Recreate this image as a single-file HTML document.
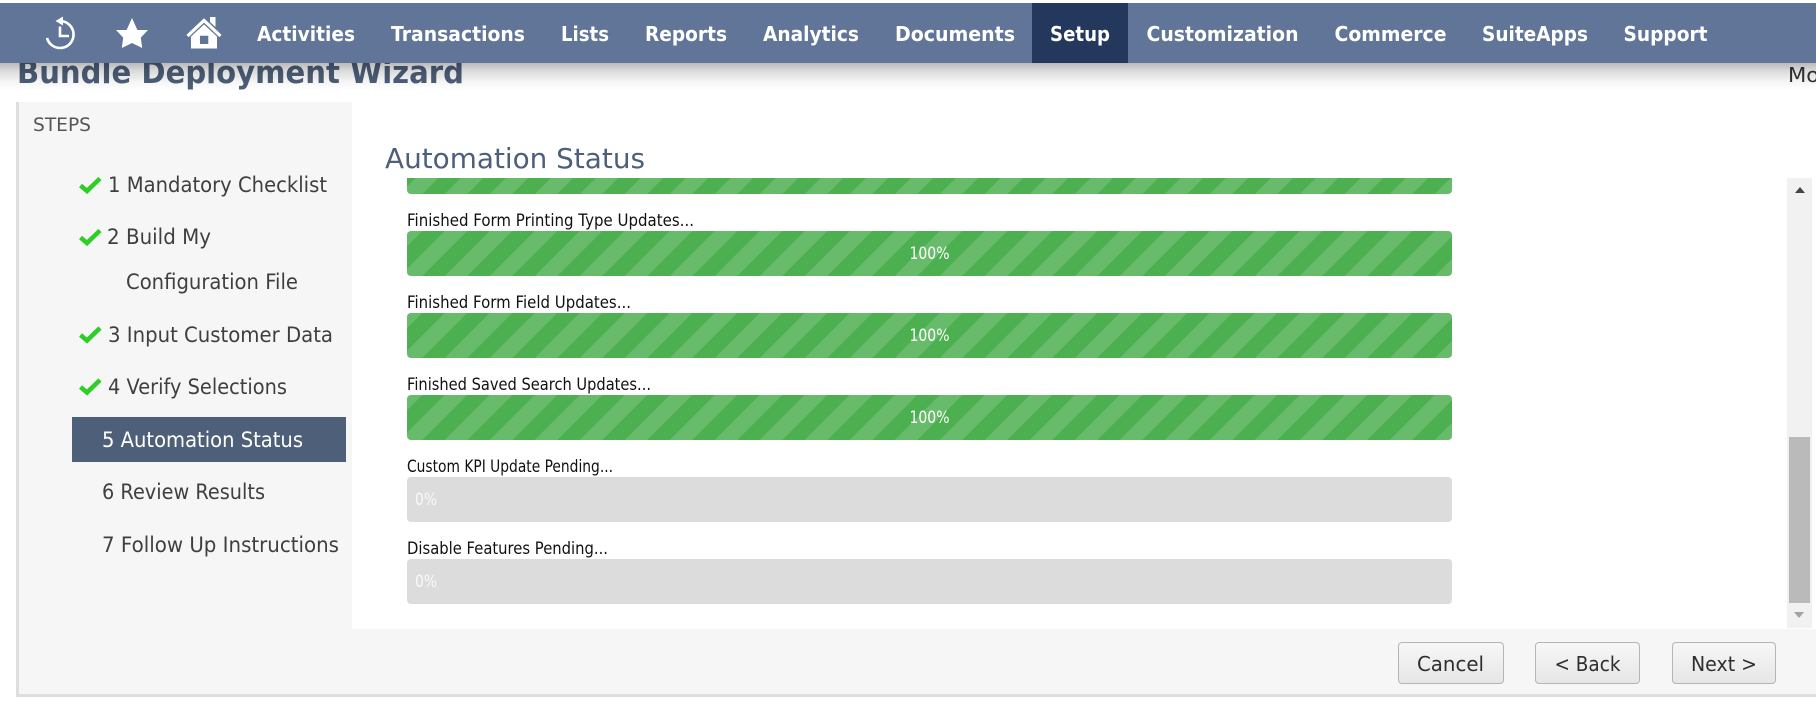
<!DOCTYPE html>
<html lang="en">
<head>
<meta charset="utf-8">
<title>Bundle Deployment Wizard</title>
<style>
html,body{margin:0;padding:0;background:#fff;}
body{width:1816px;height:706px;overflow:hidden;position:relative;font-family:"DejaVu Sans","Liberation Sans",sans-serif;}
.a{position:absolute;}
.bar{position:absolute;left:407px;width:1045px;height:45px;border-radius:4px;}
.g{background-color:#4caf50;background-image:linear-gradient(135deg,rgba(255,255,255,.15) 25%,transparent 25%,transparent 50%,rgba(255,255,255,.15) 50%,rgba(255,255,255,.15) 75%,transparent 75%,transparent);background-size:45px 45px;background-position:-7px 0;}
.z{background:#dcdcdc;}
.btn{position:absolute;top:642px;height:40px;border:1px solid #b5b5b5;border-radius:4px;background:linear-gradient(#f7f7f7,#e6e6e6);}
svg{position:absolute;left:0;top:0;}
text{font-family:"DejaVu Sans","Liberation Sans",sans-serif;}
</style>
</head>
<body>
<!-- panel frame -->
<div class="a" style="left:16px;top:102px;width:1800px;height:595px;background:#dedede;"></div>
<div class="a" style="left:19px;top:102px;width:1797px;height:592px;background:#f6f6f6;"></div>
<div class="a" style="left:352px;top:102px;width:1464px;height:527px;background:#fff;"></div>

<!-- active step -->
<div class="a" style="left:72px;top:417px;width:274px;height:45px;background:#4d5f79;"></div>

<!-- progress bars -->
<div class="bar g" style="top:178px;height:16px;border-radius:0 0 4px 4px;background-position:-7px -29px;"></div>
<div class="bar g" style="top:231px;"></div>
<div class="bar g" style="top:313px;"></div>
<div class="bar g" style="top:395px;"></div>
<div class="bar z" style="top:477px;"></div>
<div class="bar z" style="top:559px;"></div>

<!-- scrollbar -->
<div class="a" style="left:1787px;top:178px;width:25px;height:450px;background:#f1f1f1;"></div>
<div class="a" style="left:1789px;top:437px;width:21px;height:166px;background:#bababa;"></div>
<div class="a" style="left:1795px;top:187px;width:0;height:0;border-left:5px solid transparent;border-right:5px solid transparent;border-bottom:6px solid #444;"></div>
<div class="a" style="left:1794px;top:612px;width:0;height:0;border-left:5.5px solid transparent;border-right:5.5px solid transparent;border-top:6px solid #a3a3a3;"></div>

<!-- buttons -->
<div class="btn" style="left:1398px;width:104px;"></div>
<div class="btn" style="left:1535px;width:103px;"></div>
<div class="btn" style="left:1672px;width:102px;"></div>

<!-- text under the nav shadow -->
<svg width="1816" height="706" viewBox="0 0 1816 706" xmlns="http://www.w3.org/2000/svg">
  <text x="17" y="83" font-size="31" font-weight="700" fill="#4d5f79" textLength="447" lengthAdjust="spacingAndGlyphs">Bundle Deployment Wizard</text>
  <text x="1788" y="82" font-size="20" fill="#333" textLength="40" lengthAdjust="spacingAndGlyphs">Mor</text>

  <text x="33" y="131" font-size="19" fill="#555" textLength="58" lengthAdjust="spacingAndGlyphs">STEPS</text>

  <g font-size="21" fill="#3f3f3f">
    <text x="108" y="192" textLength="219" lengthAdjust="spacingAndGlyphs">1 Mandatory Checklist</text>
    <text x="107" y="244" textLength="104" lengthAdjust="spacingAndGlyphs">2 Build My</text>
    <text x="126" y="289" textLength="172" lengthAdjust="spacingAndGlyphs">Configuration File</text>
    <text x="108" y="342" textLength="225" lengthAdjust="spacingAndGlyphs">3 Input Customer Data</text>
    <text x="108" y="394" textLength="179" lengthAdjust="spacingAndGlyphs">4 Verify Selections</text>
    <text x="102" y="447" fill="#fff" textLength="201" lengthAdjust="spacingAndGlyphs">5 Automation Status</text>
    <text x="102" y="499" textLength="163" lengthAdjust="spacingAndGlyphs">6 Review Results</text>
    <text x="102" y="552" textLength="237" lengthAdjust="spacingAndGlyphs">7 Follow Up Instructions</text>
  </g>

  <g fill="none" stroke="#2fce27" stroke-width="4.6" stroke-linejoin="miter">
    <path d="M80.5 185.5 L87 191 L100 178.5"/>
    <path d="M80.5 237.5 L87 243 L100 230.5"/>
    <path d="M80.5 335 L87 340.5 L100 328"/>
    <path d="M80.5 387 L87 392.5 L100 380"/>
  </g>

  <text x="385" y="168" font-size="28" fill="#4d5f79" textLength="260" lengthAdjust="spacingAndGlyphs">Automation Status</text>

  <g font-size="16.5" fill="#111">
    <text x="407" y="226" textLength="287" lengthAdjust="spacingAndGlyphs">Finished Form Printing Type Updates...</text>
    <text x="407" y="308" textLength="224" lengthAdjust="spacingAndGlyphs">Finished Form Field Updates...</text>
    <text x="407" y="390" textLength="244" lengthAdjust="spacingAndGlyphs">Finished Saved Search Updates...</text>
    <text x="407" y="472" textLength="206" lengthAdjust="spacingAndGlyphs">Custom KPI Update Pending...</text>
    <text x="407" y="554" textLength="201" lengthAdjust="spacingAndGlyphs">Disable Features Pending...</text>
  </g>

  <g font-size="17" fill="#fff">
    <text x="909.5" y="259" textLength="40" lengthAdjust="spacingAndGlyphs">100%</text>
    <text x="909.5" y="341" textLength="40" lengthAdjust="spacingAndGlyphs">100%</text>
    <text x="909.5" y="423" textLength="40" lengthAdjust="spacingAndGlyphs">100%</text>
    <text x="415" y="505" fill="#f8f8f8" textLength="22" lengthAdjust="spacingAndGlyphs">0%</text>
    <text x="415" y="587" fill="#f8f8f8" textLength="22" lengthAdjust="spacingAndGlyphs">0%</text>
  </g>

  <g font-size="20.5" fill="#2e2e2e">
    <text x="1417" y="671" textLength="67" lengthAdjust="spacingAndGlyphs">Cancel</text>
    <text x="1554.5" y="671" textLength="66" lengthAdjust="spacingAndGlyphs">&lt; Back</text>
    <text x="1691" y="671" textLength="66" lengthAdjust="spacingAndGlyphs">Next &gt;</text>
  </g>
</svg>

<!-- nav shadow -->
<div class="a" style="left:0;top:63px;width:1816px;height:27px;background:linear-gradient(rgba(0,0,0,.27),rgba(0,0,0,.14) 30%,rgba(0,0,0,.04) 70%,rgba(0,0,0,0));"></div>

<!-- nav -->
<div class="a" style="left:0;top:3px;width:1816px;height:60px;background:#607598;"></div>
<div class="a" style="left:1032px;top:3px;width:96px;height:60px;background:#24375c;"></div>

<svg width="1816" height="70" viewBox="0 0 1816 70" xmlns="http://www.w3.org/2000/svg">
  <!-- recent records -->
  <path d="M60.5 21 A13.5 13.5 0 1 1 47 38" fill="none" stroke="#fff" stroke-width="2.6"/>
  <path d="M55.5 21 L63 16.5 L63 25.5 Z" fill="#fff"/>
  <path d="M60 26.5 L60 36 L69 36" fill="none" stroke="#fff" stroke-width="2.6"/>
  <!-- star -->
  <path d="M132 18 L137.4 30 L148 30 L140.8 37.6 L142.2 48 L132 43 L121.8 48 L123.2 37.6 L116 30 L126.6 30 Z" fill="#fff"/>
  <!-- house -->
  <path d="M187.5 36 L204 20.5 L220.5 36" fill="none" stroke="#fff" stroke-width="3.2"/>
  <path d="M210 17 H215.5 V27 L210 22 Z" fill="#fff"/>
  <path fill-rule="evenodd" d="M191 36.5 L204 24.5 L217 36.5 V48.5 H191 Z M200 35.8 V44 H208.3 V35.8 Z" fill="#fff"/>

  <g font-size="20.5" font-weight="700" fill="#fff">
    <text x="257" y="41" textLength="98" lengthAdjust="spacingAndGlyphs">Activities</text>
    <text x="391" y="41" textLength="134" lengthAdjust="spacingAndGlyphs">Transactions</text>
    <text x="561" y="41" textLength="48" lengthAdjust="spacingAndGlyphs">Lists</text>
    <text x="645" y="41" textLength="82" lengthAdjust="spacingAndGlyphs">Reports</text>
    <text x="763" y="41" textLength="96" lengthAdjust="spacingAndGlyphs">Analytics</text>
    <text x="895" y="41" textLength="120" lengthAdjust="spacingAndGlyphs">Documents</text>
    <text x="1050" y="41" textLength="60" lengthAdjust="spacingAndGlyphs">Setup</text>
    <text x="1146.5" y="41" textLength="152" lengthAdjust="spacingAndGlyphs">Customization</text>
    <text x="1334.5" y="41" textLength="112" lengthAdjust="spacingAndGlyphs">Commerce</text>
    <text x="1482" y="41" textLength="106" lengthAdjust="spacingAndGlyphs">SuiteApps</text>
    <text x="1623.5" y="41" textLength="84" lengthAdjust="spacingAndGlyphs">Support</text>
  </g>
</svg>
</body>
</html>
